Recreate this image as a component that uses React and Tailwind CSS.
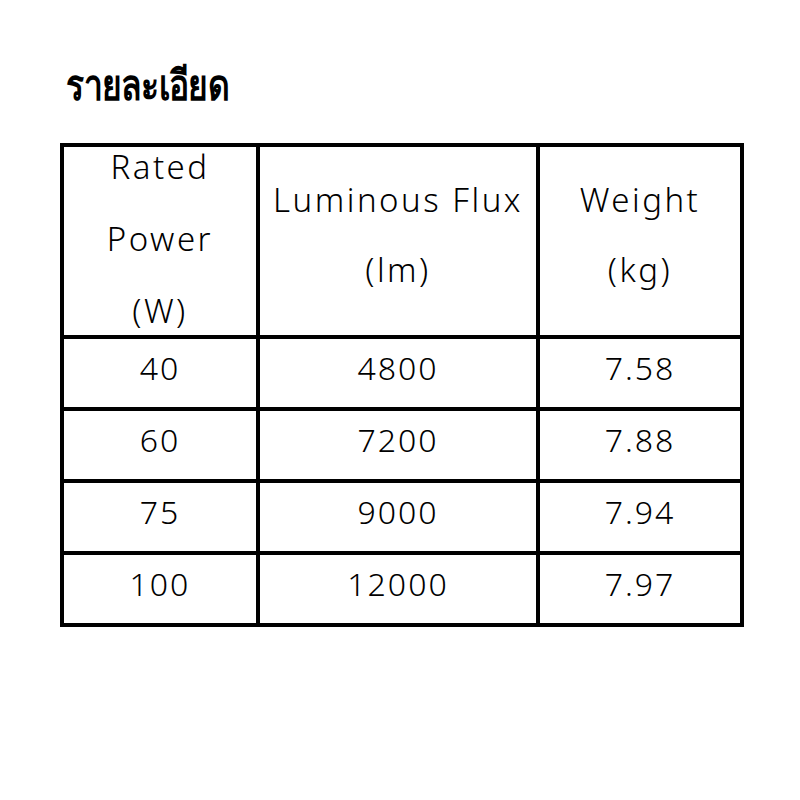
import React from 'react'

const rows = [
  ['40', '4800', '7.58'],
  ['60', '7200', '7.88'],
  ['75', '9000', '7.94'],
  ['100', '12000', '7.97'],
]

function Cell({ children, className = '' }) {
  return (
    <div className={`bg-white flex flex-col items-center justify-center text-center ${className}`}>
      {children}
    </div>
  )
}

export default function App() {
  return (
    <div
      className="w-[800px] h-[800px] bg-white text-black relative"
      style={{ fontFamily: '"Noto Sans", "DejaVu Sans", sans-serif' }}
    >
      <div className="pt-[58px] pl-[66px] h-[143px]">
        <h1 className="inline-block origin-left scale-x-[0.8] text-[42px] font-black leading-[52px] tracking-[-1px]">
          รายละเอียด
        </h1>
      </div>

      <div className="ml-[60px] w-[684px] bg-black p-[4px] grid grid-cols-[192px_276px_200px] grid-rows-[188px_68px_68px_68px_68px] gap-[4px] text-[32px] font-light tracking-[2px]">
        <Cell className="leading-[72px] pb-[5px] text-[33px] tracking-[2.5px]">
          <span>Rated</span>
          <span>Power</span>
          <span>(W)</span>
        </Cell>
        <Cell className="leading-[70px] pb-[12px] text-[33px] tracking-[2.5px]">
          <span>Luminous Flux</span>
          <span>(lm)</span>
        </Cell>
        <Cell className="leading-[70px] pb-[12px] text-[33px] tracking-[2.5px]">
          <span>Weight</span>
          <span>(kg)</span>
        </Cell>
        {rows.map((r, i) => (
          <React.Fragment key={i}>
            <Cell className="pb-[10px]">{r[0]}</Cell>
            <Cell className="pb-[10px]">{r[1]}</Cell>
            <Cell className="pb-[10px]">{r[2]}</Cell>
          </React.Fragment>
        ))}
      </div>
    </div>
  )
}
